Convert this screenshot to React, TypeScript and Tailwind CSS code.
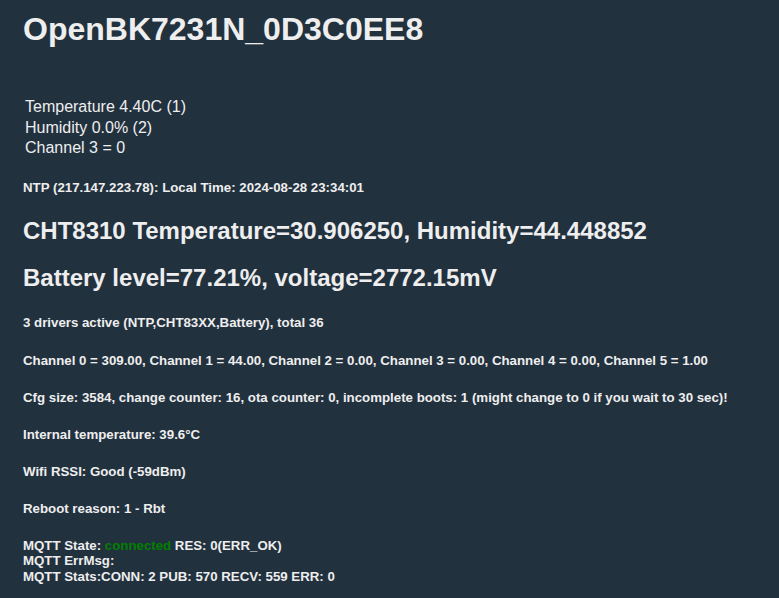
export default function App() {
  const rows = [
    "3 drivers active (NTP,CHT83XX,Battery), total 36",
    "Channel 0 = 309.00, Channel 1 = 44.00, Channel 2 = 0.00, Channel 3 = 0.00, Channel 4 = 0.00, Channel 5 = 1.00",
    "Cfg size: 3584, change counter: 16, ota counter: 0, incomplete boots: 1 (might change to 0 if you wait to 30 sec)!",
    "Internal temperature: 39.6°C",
    "Wifi RSSI: Good (-59dBm)",
    "Reboot reason: 1 - Rbt",
  ];

  return (
    <div className="min-h-screen bg-[#22313e] text-[#eeeeee] font-['Liberation_Sans',Arial,sans-serif] px-[23px] pt-[11px] pb-4">
      <h1 className="text-[32px] font-bold leading-[37px]">OpenBK7231N_0D3C0EE8</h1>

      {/* channel readings */}
      <div className="mt-[49px] pl-[2px] text-base leading-[20.5px]">
        <div>Temperature 4.40C (1)</div>
        <div>Humidity 0.0% (2)</div>
        <div>Channel 3 = 0</div>
      </div>

      <h5 className="mt-[21px] text-[13.28px] font-bold leading-[15px]">
        NTP (217.147.223.78): Local Time: 2024-08-28 23:34:01
      </h5>

      <h2 className="mt-[22px] text-2xl font-bold leading-[28px]">
        CHT8310 Temperature=30.906250, Humidity=44.448852
      </h2>
      <h2 className="mt-[19px] text-2xl font-bold leading-[28px]">
        Battery level=77.21%, voltage=2772.15mV
      </h2>

      <div className="mt-[23px] flex flex-col gap-[22px] text-[13.28px] font-bold leading-[15px]">
        {rows.map((r, i) => (
          <h5 key={r} className={i === 0 ? "mb-[1px]" : ""}>
            {r}
          </h5>
        ))}
        <h5 className="leading-[15.5px]">
          MQTT State: <span className="text-[#008000]">connected</span> RES: 0(ERR_OK)
          <br />
          MQTT ErrMsg:
          <br />
          MQTT Stats:CONN: 2 PUB: 570 RECV: 559 ERR: 0
        </h5>
      </div>
    </div>
  );
}
